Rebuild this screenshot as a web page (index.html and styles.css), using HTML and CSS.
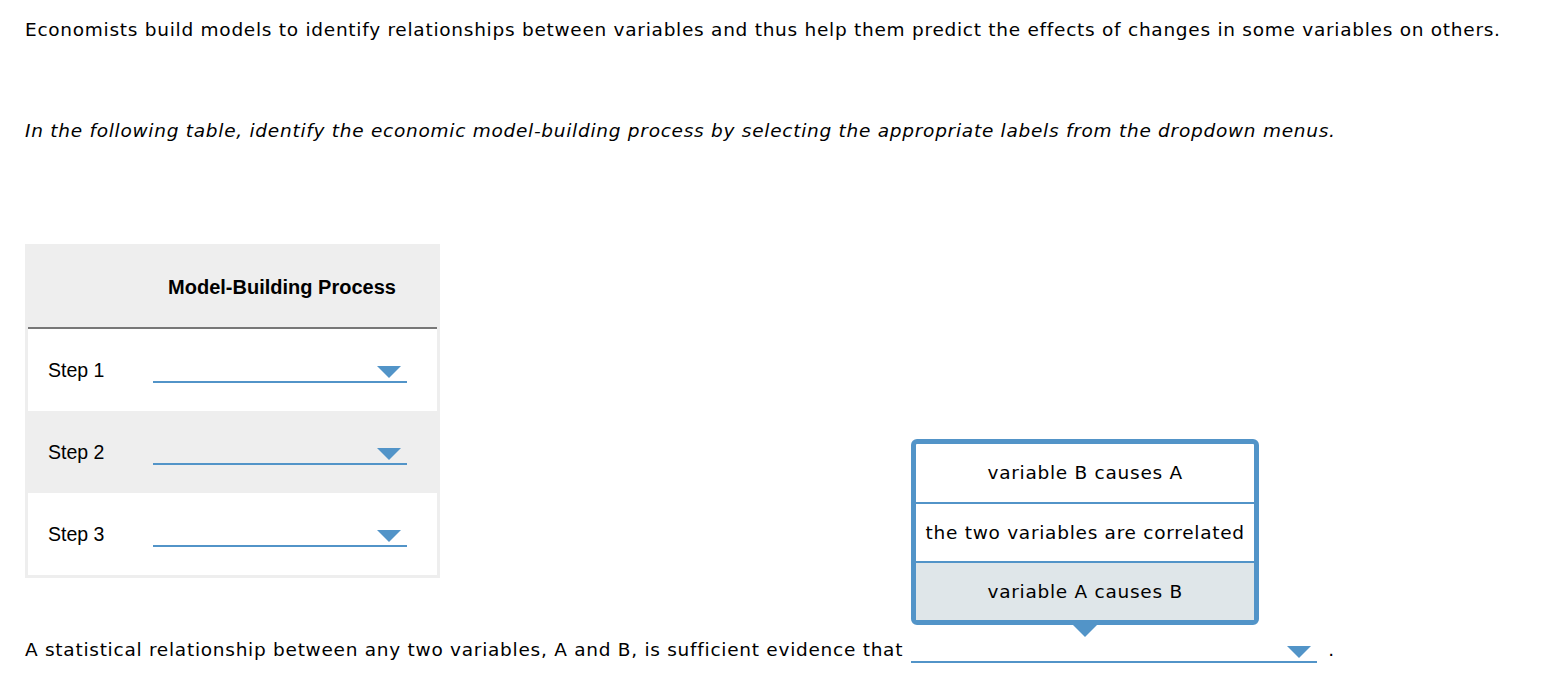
FILE: index.html
```html
<!DOCTYPE html>
<html lang="en">
<head>
    <meta charset="UTF-8">
    <meta name="viewport" content="width=device-width, initial-scale=1.0">
    <title>Model-Building Process</title>
    <link rel="stylesheet" href="styles.css">
</head>
<body>
    <div class="question">
        <p class="intro">Economists build models to identify relationships between variables and thus help them predict the effects of changes in some variables on others.</p>
        <p class="instruction">In the following table, identify the economic model-building process by selecting the appropriate labels from the dropdown menus.</p>

        <table class="steps">
            <thead>
                <tr>
                    <th></th>
                    <th>Model-Building Process</th>
                    <th></th>
                </tr>
            </thead>
            <tbody>
                <tr>
                    <td class="label">Step 1</td>
                    <td><div class="select"><span class="caret"></span></div></td>
                    <td></td>
                </tr>
                <tr class="alt">
                    <td class="label">Step 2</td>
                    <td><div class="select"><span class="caret"></span></div></td>
                    <td></td>
                </tr>
                <tr>
                    <td class="label">Step 3</td>
                    <td><div class="select"><span class="caret"></span></div></td>
                    <td></td>
                </tr>
            </tbody>
        </table>

        <div class="sentence">
            <span>A statistical relationship between any two variables, A and B, is sufficient evidence that</span>
            <div class="select wide">
                <span class="caret"></span>
                <!-- open menu for this dropdown -->
                <ul class="menu">
                    <li>variable B causes A</li>
                    <li>the two variables are correlated</li>
                    <li class="hover">variable A causes B</li>
                </ul>
            </div>
            <span class="dot">.</span>
        </div>
    </div>
</body>
</html>
```

FILE: styles.css
```css
body {
    margin: 0;
    background-color: #fff;
    color: #000;
    font-family: "DejaVu Sans", Verdana, sans-serif;
    font-size: 18.5px;
    letter-spacing: 0.73px;
}
.question {
    padding: 18px 25px 0 25px;
}
p {
    margin: 0;
    line-height: 24px;
}
.instruction {
    margin-top: 77px;
    font-style: italic;
}
.steps {
    margin-top: 101px;
    border-collapse: collapse;
    border: 3px solid #eee;
    font-family: "Liberation Sans", Arial, sans-serif;
    font-size: 19.5px;
    letter-spacing: 0;
}
.steps th {
    background-color: #eee;
    height: 80px;
    padding: 0 0 0 4px;
    border-bottom: 2px solid #777;
    font-size: 20px;
    font-weight: bold;
    text-align: center;
}
.steps th:first-child {
    width: 125px;
    padding: 0;
}
.steps th:last-child,
.steps td:last-child {
    width: 30px;
    padding: 0;
}
.steps td {
    height: 82px;
    padding: 0;
}
.steps tr.alt td {
    background-color: #eee;
}
.steps .label {
    width: 105px;
    padding-left: 20px;
}
.select {
    position: relative;
    width: 254px;
    height: 24px;
    border-bottom: 2px solid #5294c8;
}
.caret {
    position: absolute;
    right: 6px;
    top: 9px;
    width: 0;
    height: 0;
    border-left: 12px solid transparent;
    border-right: 12px solid transparent;
    border-top: 12px solid #5294c8;
}
.sentence {
    display: flex;
    align-items: flex-end;
    margin-top: 59px;
}
.sentence span {
    line-height: 24px;
    padding-bottom: 1px;
}
.select.wide {
    width: 406px;
    margin-left: 8px;
}
.dot {
    margin-left: 11px;
}
.menu {
    position: absolute;
    left: 0;
    bottom: calc(100% + 12px);
    width: 338px;
    margin: 0;
    padding: 0;
    list-style: none;
    border: 5px solid #5294c8;
    border-radius: 6px;
    background-color: #fff;
}
.menu::after {
    content: "";
    position: absolute;
    left: 50%;
    top: 100%;
    margin-left: -12px;
    margin-top: 5px;
    border-left: 12px solid transparent;
    border-right: 12px solid transparent;
    border-top: 12px solid #5294c8;
}
.menu li {
    height: 57px;
    line-height: 57px;
    text-align: center;
    white-space: nowrap;
    border-top: 2px solid #5294c8;
}
.menu li:first-child {
    height: 58px;
    line-height: 58px;
    border-top: none;
}
.menu li.hover {
    background-color: #dfe6e9;
}
```
